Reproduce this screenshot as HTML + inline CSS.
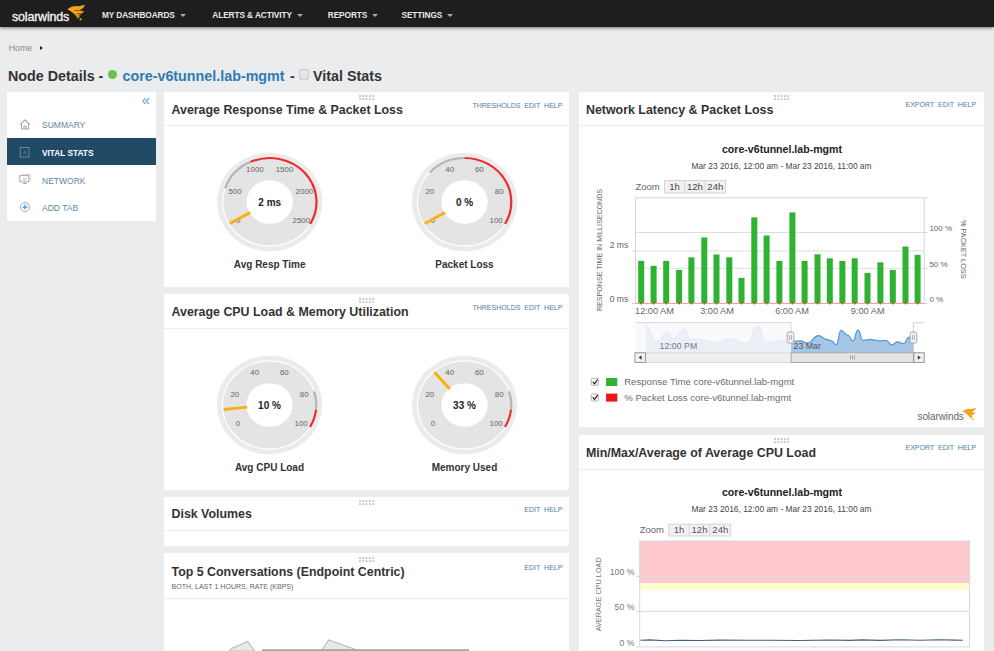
<!DOCTYPE html>
<html><head><meta charset="utf-8">
<style>
*{margin:0;padding:0;box-sizing:border-box}
html,body{width:994px;height:651px;overflow:hidden;background:#ebecee;font-family:"Liberation Sans",sans-serif;color:#333;position:relative}
.a{position:absolute;white-space:nowrap}
#nav{left:0;top:0;width:994px;height:27px;background:#1e1e1e;box-shadow:0 1.5px 3px rgba(0,0,0,.4)}
.nv{position:absolute;top:10px;font-size:8.3px;font-weight:bold;color:#e8e8e8;letter-spacing:-0.1px}
.caret{display:inline-block;width:0;height:0;border-left:3px solid transparent;border-right:3px solid transparent;border-top:3px solid #aaa;margin-left:5px;vertical-align:1px}
.panel{position:absolute;background:#fff}
.ph{position:absolute;left:0;right:0;top:0;border-bottom:1px solid #ececec}
.pt{position:absolute;left:7.5px;font-size:12.4px;font-weight:bold;color:#333}
.pl{position:absolute;font-size:7.1px;color:#4f82a3;letter-spacing:-0.05px}
.grip{position:absolute}
.side{position:absolute;font-size:8.5px;color:#5b88a3;left:42px}
</style></head><body>
<div id="nav" class="a"></div>
<div class="a" style="left:12px;top:9.5px;font-size:12.4px;color:#f2f2f2;letter-spacing:-0.15px;-webkit-text-stroke:0.35px #f2f2f2">solarwinds</div>
<svg class="a" style="left:0;top:0" width="100" height="27" viewBox="0 0 100 27"><path d="M67.3 9.2 Q73 4.8 78.6 6.3 L85.2 4.7 Q83.6 8.6 79.6 10.3 L84.6 11.2 Q81.6 14 78.6 14.9 L80.6 15.6 Q79.2 17.8 77.6 18.4 Q75.5 13.5 67.3 9.2 Z" fill="#f7a21b"/><circle cx="80.6" cy="19.3" r="1.1" fill="#f7a21b"/><path d="M74.5 10.6 Q79 10.4 84 11.1 M76.5 13.9 Q78.5 13.8 81 13.4 M77.2 16.2 Q78.6 16 80.2 15.6" fill="none" stroke="#1e1e1e" stroke-width="0.55"/></svg>
<div class="nv" style="left:102px">MY DASHBOARDS<span class="caret"></span></div>
<div class="nv" style="left:212.3px">ALERTS &amp; ACTIVITY<span class="caret"></span></div>
<div class="nv" style="left:327.8px">REPORTS<span class="caret"></span></div>
<div class="nv" style="left:401.5px">SETTINGS<span class="caret"></span></div>

<div class="a" style="left:8.8px;top:42.5px;font-size:8.7px;color:#8a8a8a">Home</div>
<div class="a" style="left:39.5px;top:46px;width:0;height:0;border-top:2.3px solid transparent;border-bottom:2.3px solid transparent;border-left:3.6px solid #222"></div>

<div class="a" style="left:8px;top:68px;font-size:14.3px;font-weight:bold;color:#333">Node Details -</div>
<div class="a" style="left:107.5px;top:70.3px;width:9px;height:9px;border-radius:50%;background:#6cc04a"></div>
<div class="a" style="left:122.5px;top:68px;font-size:14.3px;font-weight:bold;color:#2f7bb0">core-v6tunnel.lab-mgmt</div>
<div class="a" style="left:290px;top:68px;font-size:14.3px;font-weight:bold;color:#333">-</div>
<svg class="a" style="left:298px;top:68px" width="12" height="13" viewBox="0 0 12 13"><rect x="1.8" y="1.9" width="8.4" height="9.2" rx="1.4" fill="none" stroke="#c6c6c6" stroke-width="1.2"/><path d="M4 8.3 L6 4.8 L8 8.3 M3.8 8.6 H8.2" fill="none" stroke="#d2d2d2" stroke-width="0.8"/></svg>
<div class="a" style="left:313px;top:68px;font-size:14.3px;font-weight:bold;color:#333">Vital Stats</div>

<!-- sidebar -->
<div class="panel" style="left:7px;top:92px;width:149px;height:129px">
  <div class="a" style="left:134.5px;top:-1px;font-size:15px;color:#4aa3d0">&laquo;</div>
  <div class="side" style="left:35px;top:28px">SUMMARY</div>
  <div class="a" style="left:0;top:46px;width:149px;height:27px;background:#204a66"></div>
  <div class="side" style="left:35px;top:56px;color:#fff;font-weight:bold;font-size:8.3px">VITAL STATS</div>
  <div class="side" style="left:35px;top:84px">NETWORK</div>
  <div class="side" style="left:35px;top:111px">ADD TAB</div>
  <svg class="a" style="left:0;top:0" width="40" height="129" viewBox="0 0 40 129">
    <path d="M13.3 32.3 L18 27.8 L22.7 32.3 M14.5 31.2 V37 H21.5 V31.2 M17 37 V34.2 H19 V37" fill="none" stroke="#a8a8a8" stroke-width="1.1"/>
    <rect x="13.3" y="55.5" width="8.6" height="9.6" fill="none" stroke="#6d8599" stroke-width="1"/>
    <path d="M16.3 62.3 L17.6 59.3 L18.9 62.3" fill="none" stroke="#6d8599" stroke-width="0.7"/>
    <rect x="12.8" y="83.6" width="9" height="6.2" fill="none" stroke="#a8a8a8" stroke-width="1"/>
    <path d="M14.8 82.3 H23.3 V88" fill="none" stroke="#c8c8c8" stroke-width="0.8"/>
    <path d="M15.8 91.5 H19.8 M17.8 89.8 V91.5" stroke="#a8a8a8" stroke-width="0.9"/>
    <path d="M16 87 L17.3 88 L19.3 85.6" fill="none" stroke="#909090" stroke-width="0.8"/>
    <circle cx="17.9" cy="115.1" r="4.5" fill="none" stroke="#aaa" stroke-width="1"/>
    <path d="M17.9 112.6 V117.6 M15.4 115.1 H20.4" stroke="#3a9ad6" stroke-width="1.2"/>
  </svg>
</div>

<div class="panel" style="left:164px;top:92px;width:405px;height:195px">
  <div class="ph" style="height:34.1px"></div>
  <svg class="grip" style="left:195.2px;top:2.9px" width="16" height="6" style="overflow:visible"><rect x="0.00" y="0.00" width="2" height="2" fill="#cbcbcb"/><rect x="3.30" y="0.00" width="2" height="2" fill="#cbcbcb"/><rect x="6.60" y="0.00" width="2" height="2" fill="#cbcbcb"/><rect x="9.90" y="0.00" width="2" height="2" fill="#cbcbcb"/><rect x="13.20" y="0.00" width="2" height="2" fill="#cbcbcb"/><rect x="0.00" y="3.10" width="2" height="2" fill="#cbcbcb"/><rect x="3.30" y="3.10" width="2" height="2" fill="#cbcbcb"/><rect x="6.60" y="3.10" width="2" height="2" fill="#cbcbcb"/><rect x="9.90" y="3.10" width="2" height="2" fill="#cbcbcb"/><rect x="13.20" y="3.10" width="2" height="2" fill="#cbcbcb"/></svg>
  <div class="pt" style="top:10.5px">Average Response Time &amp; Packet Loss</div>
  <div class="pl" style="right:6.6px;top:9.6px">THRESHOLDS&nbsp; EDIT&nbsp; HELP</div>
</div>
<div class="panel" style="left:164px;top:294px;width:405px;height:196px">
  <div class="ph" style="height:34.8px"></div>
  <svg class="grip" style="left:195.2px;top:4.2px" width="16" height="6" style="overflow:visible"><rect x="0.00" y="0.00" width="2" height="2" fill="#cbcbcb"/><rect x="3.30" y="0.00" width="2" height="2" fill="#cbcbcb"/><rect x="6.60" y="0.00" width="2" height="2" fill="#cbcbcb"/><rect x="9.90" y="0.00" width="2" height="2" fill="#cbcbcb"/><rect x="13.20" y="0.00" width="2" height="2" fill="#cbcbcb"/><rect x="0.00" y="3.10" width="2" height="2" fill="#cbcbcb"/><rect x="3.30" y="3.10" width="2" height="2" fill="#cbcbcb"/><rect x="6.60" y="3.10" width="2" height="2" fill="#cbcbcb"/><rect x="9.90" y="3.10" width="2" height="2" fill="#cbcbcb"/><rect x="13.20" y="3.10" width="2" height="2" fill="#cbcbcb"/></svg>
  <div class="pt" style="top:10.5px">Average CPU Load &amp; Memory Utilization</div>
  <div class="pl" style="right:6.6px;top:9.8px">THRESHOLDS&nbsp; EDIT&nbsp; HELP</div>
</div>
<div class="panel" style="left:164px;top:497px;width:405px;height:49px">
  <div class="ph" style="height:34.4px"></div>
  <svg class="grip" style="left:195.2px;top:3.0px" width="16" height="6" style="overflow:visible"><rect x="0.00" y="0.00" width="2" height="2" fill="#cbcbcb"/><rect x="3.30" y="0.00" width="2" height="2" fill="#cbcbcb"/><rect x="6.60" y="0.00" width="2" height="2" fill="#cbcbcb"/><rect x="9.90" y="0.00" width="2" height="2" fill="#cbcbcb"/><rect x="13.20" y="0.00" width="2" height="2" fill="#cbcbcb"/><rect x="0.00" y="3.10" width="2" height="2" fill="#cbcbcb"/><rect x="3.30" y="3.10" width="2" height="2" fill="#cbcbcb"/><rect x="6.60" y="3.10" width="2" height="2" fill="#cbcbcb"/><rect x="9.90" y="3.10" width="2" height="2" fill="#cbcbcb"/><rect x="13.20" y="3.10" width="2" height="2" fill="#cbcbcb"/></svg>
  <div class="pt" style="top:10.0px">Disk Volumes</div>
  <div class="pl" style="right:6.6px;top:9.3px">EDIT&nbsp; HELP</div>
</div>
<div class="panel" style="left:164px;top:553.3px;width:405px;height:100px">
  <div class="ph" style="height:45.8px"></div>
  <svg class="grip" style="left:195.2px;top:3.4px" width="16" height="6" style="overflow:visible"><rect x="0.00" y="0.00" width="2" height="2" fill="#cbcbcb"/><rect x="3.30" y="0.00" width="2" height="2" fill="#cbcbcb"/><rect x="6.60" y="0.00" width="2" height="2" fill="#cbcbcb"/><rect x="9.90" y="0.00" width="2" height="2" fill="#cbcbcb"/><rect x="13.20" y="0.00" width="2" height="2" fill="#cbcbcb"/><rect x="0.00" y="3.10" width="2" height="2" fill="#cbcbcb"/><rect x="3.30" y="3.10" width="2" height="2" fill="#cbcbcb"/><rect x="6.60" y="3.10" width="2" height="2" fill="#cbcbcb"/><rect x="9.90" y="3.10" width="2" height="2" fill="#cbcbcb"/><rect x="13.20" y="3.10" width="2" height="2" fill="#cbcbcb"/></svg>
  <div class="pt" style="top:11.6px">Top 5 Conversations (Endpoint Centric)</div>
  <div class="pl" style="right:6.6px;top:10.5px">EDIT&nbsp; HELP</div>
  <div class="a" style="left:7.5px;top:30px;font-size:7.05px;color:#666">BOTH, LAST 1 HOURS, RATE (KBPS)</div>
</div>
<div class="panel" style="left:578.5px;top:92.3px;width:405.5px;height:334.5px">
  <div class="ph" style="height:33.7px"></div>
  <svg class="grip" style="left:195px;top:2.9px" width="16" height="6" style="overflow:visible"><rect x="0.00" y="0.00" width="2" height="2" fill="#cbcbcb"/><rect x="3.30" y="0.00" width="2" height="2" fill="#cbcbcb"/><rect x="6.60" y="0.00" width="2" height="2" fill="#cbcbcb"/><rect x="9.90" y="0.00" width="2" height="2" fill="#cbcbcb"/><rect x="13.20" y="0.00" width="2" height="2" fill="#cbcbcb"/><rect x="0.00" y="3.10" width="2" height="2" fill="#cbcbcb"/><rect x="3.30" y="3.10" width="2" height="2" fill="#cbcbcb"/><rect x="6.60" y="3.10" width="2" height="2" fill="#cbcbcb"/><rect x="9.90" y="3.10" width="2" height="2" fill="#cbcbcb"/><rect x="13.20" y="3.10" width="2" height="2" fill="#cbcbcb"/></svg>
  <div class="pt" style="top:10.5px">Network Latency &amp; Packet Loss</div>
  <div class="pl" style="right:7.8px;top:9.1px">EXPORT&nbsp; EDIT&nbsp; HELP</div>
</div>
<div class="panel" style="left:578.5px;top:435.2px;width:405.5px;height:220px">
  <div class="ph" style="height:34.5px"></div>
  <svg class="grip" style="left:195px;top:2.9px" width="16" height="6" style="overflow:visible"><rect x="0.00" y="0.00" width="2" height="2" fill="#cbcbcb"/><rect x="3.30" y="0.00" width="2" height="2" fill="#cbcbcb"/><rect x="6.60" y="0.00" width="2" height="2" fill="#cbcbcb"/><rect x="9.90" y="0.00" width="2" height="2" fill="#cbcbcb"/><rect x="13.20" y="0.00" width="2" height="2" fill="#cbcbcb"/><rect x="0.00" y="3.10" width="2" height="2" fill="#cbcbcb"/><rect x="3.30" y="3.10" width="2" height="2" fill="#cbcbcb"/><rect x="6.60" y="3.10" width="2" height="2" fill="#cbcbcb"/><rect x="9.90" y="3.10" width="2" height="2" fill="#cbcbcb"/><rect x="13.20" y="3.10" width="2" height="2" fill="#cbcbcb"/></svg>
  <div class="pt" style="top:10.6px">Min/Max/Average of Average CPU Load</div>
  <div class="pl" style="right:7.8px;top:9.1px">EXPORT&nbsp; EDIT&nbsp; HELP</div>
</div>
<svg class="a" style="left:0;top:0" width="994" height="651" font-family="Liberation Sans"><g transform="translate(269.7 202) scale(1 0.94) translate(-269.7 -202)">
<circle cx="269.7" cy="202" r="52.5" fill="#ebebeb"/>
<circle cx="269.7" cy="202" r="47.6" fill="#fff"/>
<circle cx="269.7" cy="202" r="46.4" fill="#e4e4e4"/>
<path d="M225.19 187.54 A46.8 46.8 0 0 1 250.66 159.25" fill="none" stroke="#b4b4b4" stroke-width="2.2"/>
<path d="M250.66 159.25 A46.8 46.8 0 0 1 310.23 225.40" fill="none" stroke="#ee2a2f" stroke-width="2.2"/>
<circle cx="269.7" cy="202" r="23.2" fill="#fff"/>
</g>
<text x="238.1" y="223.1" font-size="7.9" fill="#636363" text-anchor="middle">0</text>
<text x="235.0" y="193.5" font-size="7.9" fill="#636363" text-anchor="middle">500</text>
<text x="254.9" y="171.5" font-size="7.9" fill="#636363" text-anchor="middle">1000</text>
<text x="284.5" y="171.5" font-size="7.9" fill="#636363" text-anchor="middle">1500</text>
<text x="304.4" y="193.5" font-size="7.9" fill="#636363" text-anchor="middle">2000</text>
<text x="301.3" y="223.1" font-size="7.9" fill="#636363" text-anchor="middle">2500</text>
<g transform="translate(269.7 202) scale(1 0.94) translate(-269.7 -202)"><line x1="250.18" y1="213.18" x2="229.79" y2="224.87" stroke="#f5b20f" stroke-width="3"/></g>
<text x="269.7" y="205.6" font-size="10" font-weight="bold" fill="#222" text-anchor="middle">2 ms</text>
<text x="269.7" y="268" font-size="10" font-weight="bold" fill="#333" text-anchor="middle">Avg Resp Time</text>
<g transform="translate(464.5 202) scale(1 0.94) translate(-464.5 -202)">
<circle cx="464.5" cy="202" r="52.5" fill="#ebebeb"/>
<circle cx="464.5" cy="202" r="47.6" fill="#fff"/>
<circle cx="464.5" cy="202" r="46.4" fill="#e4e4e4"/>
<path d="M429.72 170.68 A46.8 46.8 0 0 1 464.50 155.20" fill="none" stroke="#b4b4b4" stroke-width="2.2"/>
<path d="M464.50 155.20 A46.8 46.8 0 0 1 505.03 225.40" fill="none" stroke="#ee2a2f" stroke-width="2.2"/>
<circle cx="464.5" cy="202" r="23.2" fill="#fff"/>
</g>
<text x="432.9" y="223.1" font-size="7.9" fill="#636363" text-anchor="middle">0</text>
<text x="429.8" y="193.5" font-size="7.9" fill="#636363" text-anchor="middle">20</text>
<text x="449.7" y="171.5" font-size="7.9" fill="#636363" text-anchor="middle">40</text>
<text x="479.3" y="171.5" font-size="7.9" fill="#636363" text-anchor="middle">60</text>
<text x="499.2" y="193.5" font-size="7.9" fill="#636363" text-anchor="middle">80</text>
<text x="496.1" y="223.1" font-size="7.9" fill="#636363" text-anchor="middle">100</text>
<g transform="translate(464.5 202) scale(1 0.94) translate(-464.5 -202)"><line x1="445.01" y1="213.25" x2="424.66" y2="225.00" stroke="#f5b20f" stroke-width="3"/></g>
<text x="464.5" y="205.6" font-size="10" font-weight="bold" fill="#222" text-anchor="middle">0 %</text>
<text x="464.5" y="268" font-size="10" font-weight="bold" fill="#333" text-anchor="middle">Packet Loss</text>
<g transform="translate(269.5 405) scale(1 0.94) translate(-269.5 -405)">
<circle cx="269.5" cy="405" r="52.5" fill="#ebebeb"/>
<circle cx="269.5" cy="405" r="47.6" fill="#fff"/>
<circle cx="269.5" cy="405" r="46.4" fill="#e4e4e4"/>
<path d="M314.01 390.54 A46.8 46.8 0 0 1 316.04 409.89" fill="none" stroke="#b4b4b4" stroke-width="2.2"/>
<path d="M316.04 409.89 A46.8 46.8 0 0 1 310.03 428.40" fill="none" stroke="#ee2a2f" stroke-width="2.2"/>
<circle cx="269.5" cy="405" r="23.2" fill="#fff"/>
</g>
<text x="237.9" y="426.1" font-size="7.9" fill="#636363" text-anchor="middle">0</text>
<text x="234.8" y="396.5" font-size="7.9" fill="#636363" text-anchor="middle">20</text>
<text x="254.7" y="374.5" font-size="7.9" fill="#636363" text-anchor="middle">40</text>
<text x="284.3" y="374.5" font-size="7.9" fill="#636363" text-anchor="middle">60</text>
<text x="304.2" y="396.5" font-size="7.9" fill="#636363" text-anchor="middle">80</text>
<text x="301.1" y="426.1" font-size="7.9" fill="#636363" text-anchor="middle">100</text>
<g transform="translate(269.5 405) scale(1 0.94) translate(-269.5 -405)"><line x1="247.12" y1="407.35" x2="223.75" y2="409.81" stroke="#f5b20f" stroke-width="3"/></g>
<text x="269.5" y="408.6" font-size="10" font-weight="bold" fill="#222" text-anchor="middle">10 %</text>
<text x="269.5" y="471" font-size="10" font-weight="bold" fill="#333" text-anchor="middle">Avg CPU Load</text>
<g transform="translate(464.5 405) scale(1 0.94) translate(-464.5 -405)">
<circle cx="464.5" cy="405" r="52.5" fill="#ebebeb"/>
<circle cx="464.5" cy="405" r="47.6" fill="#fff"/>
<circle cx="464.5" cy="405" r="46.4" fill="#e4e4e4"/>
<path d="M509.01 390.54 A46.8 46.8 0 0 1 511.04 409.89" fill="none" stroke="#b4b4b4" stroke-width="2.2"/>
<path d="M511.04 409.89 A46.8 46.8 0 0 1 505.03 428.40" fill="none" stroke="#ee2a2f" stroke-width="2.2"/>
<circle cx="464.5" cy="405" r="23.2" fill="#fff"/>
</g>
<text x="432.9" y="426.1" font-size="7.9" fill="#636363" text-anchor="middle">0</text>
<text x="429.8" y="396.5" font-size="7.9" fill="#636363" text-anchor="middle">20</text>
<text x="449.7" y="374.5" font-size="7.9" fill="#636363" text-anchor="middle">40</text>
<text x="479.3" y="374.5" font-size="7.9" fill="#636363" text-anchor="middle">60</text>
<text x="499.2" y="396.5" font-size="7.9" fill="#636363" text-anchor="middle">80</text>
<text x="496.1" y="426.1" font-size="7.9" fill="#636363" text-anchor="middle">100</text>
<g transform="translate(464.5 405) scale(1 0.94) translate(-464.5 -405)"><line x1="449.80" y1="387.97" x2="434.44" y2="370.18" stroke="#f5b20f" stroke-width="3"/></g>
<text x="464.5" y="408.6" font-size="10" font-weight="bold" fill="#222" text-anchor="middle">33 %</text>
<text x="464.5" y="471" font-size="10" font-weight="bold" fill="#333" text-anchor="middle">Memory Used</text></svg>
<svg class="a" style="left:0;top:0" width="994" height="651" font-family="Liberation Sans"><text x="782" y="152.8" font-size="10.6" font-weight="bold" fill="#222" text-anchor="middle">core-v6tunnel.lab-mgmt</text>
<text x="781.5" y="168.5" font-size="8.4" fill="#444" text-anchor="middle">Mar 23 2016, 12:00 am - Mar 23 2016, 11:00 am</text>
<text x="635.5" y="190" font-size="9.5" fill="#666">Zoom</text>
<rect x="664.5" y="180.5" width="61" height="12.5" fill="#f2f2f2" stroke="#d4d4d4" stroke-width="1"/>
<line x1="684.8" y1="180.5" x2="684.8" y2="193" stroke="#d4d4d4"/><line x1="705" y1="180.5" x2="705" y2="193" stroke="#d4d4d4"/>
<text x="674.6" y="190" font-size="9.5" fill="#444" text-anchor="middle">1h</text>
<text x="694.9" y="190" font-size="9.5" fill="#444" text-anchor="middle">12h</text>
<text x="715.3" y="190" font-size="9.5" fill="#444" text-anchor="middle">24h</text>
<rect x="635.5" y="197.8" width="288.70000000000005" height="105.69999999999999" fill="none" stroke="#d6d6d6" stroke-width="1"/>
<line x1="635.5" y1="232.5" x2="924.2" y2="232.5" stroke="#dedede" stroke-width="1"/>
<line x1="635.5" y1="250.9" x2="924.2" y2="250.9" stroke="#dedede" stroke-width="1"/>
<line x1="635.5" y1="268.3" x2="924.2" y2="268.3" stroke="#dedede" stroke-width="1"/>
<line x1="924.2" y1="197.8" x2="927.7" y2="197.8" stroke="#d6d6d6"/>
<line x1="924.2" y1="232.5" x2="927.7" y2="232.5" stroke="#d6d6d6"/>
<line x1="924.2" y1="268.3" x2="927.7" y2="268.3" stroke="#d6d6d6"/>
<line x1="924.2" y1="303.5" x2="927.7" y2="303.5" stroke="#d6d6d6"/>
<line x1="632.0" y1="250.9" x2="635.5" y2="250.9" stroke="#d6d6d6"/>
<line x1="632.0" y1="303.5" x2="635.5" y2="303.5" stroke="#d6d6d6"/>
<rect x="638.2" y="260.9" width="6" height="42.6" fill="#2db231"/>
<rect x="650.6" y="265.9" width="6" height="37.6" fill="#2db231"/>
<rect x="663.2" y="260.9" width="6" height="42.6" fill="#2db231"/>
<rect x="676.1" y="269.9" width="6" height="33.6" fill="#2db231"/>
<rect x="688.4" y="257.3" width="6" height="46.2" fill="#2db231"/>
<rect x="701.3" y="237.5" width="6" height="66.0" fill="#2db231"/>
<rect x="713.5" y="254.5" width="6" height="49.0" fill="#2db231"/>
<rect x="726.3" y="257.3" width="6" height="46.2" fill="#2db231"/>
<rect x="738.5" y="277.9" width="6" height="25.6" fill="#2db231"/>
<rect x="751.3" y="217.4" width="6" height="86.1" fill="#2db231"/>
<rect x="763.6" y="235.5" width="6" height="68.0" fill="#2db231"/>
<rect x="776.4" y="260.9" width="6" height="42.6" fill="#2db231"/>
<rect x="789.4" y="212.4" width="6" height="91.1" fill="#2db231"/>
<rect x="801.6" y="260.9" width="6" height="42.6" fill="#2db231"/>
<rect x="814.5" y="254.3" width="6" height="49.2" fill="#2db231"/>
<rect x="826.8" y="258.3" width="6" height="45.2" fill="#2db231"/>
<rect x="839.4" y="260.9" width="6" height="42.6" fill="#2db231"/>
<rect x="851.7" y="258.3" width="6" height="45.2" fill="#2db231"/>
<rect x="864.5" y="272.9" width="6" height="30.6" fill="#2db231"/>
<rect x="877.4" y="262.3" width="6" height="41.2" fill="#2db231"/>
<rect x="889.8" y="269.9" width="6" height="33.6" fill="#2db231"/>
<rect x="902.5" y="246.5" width="6" height="57.0" fill="#2db231"/>
<rect x="914.6" y="254.9" width="6" height="48.6" fill="#2db231"/>
<line x1="635.5" y1="303.5" x2="924.2" y2="303.5" stroke="#f3a0a0" stroke-width="1"/>
<circle cx="641.2" cy="303.5" r="1" fill="#e83030"/>
<circle cx="653.6" cy="303.5" r="1" fill="#e83030"/>
<circle cx="666.2" cy="303.5" r="1" fill="#e83030"/>
<circle cx="679.1" cy="303.5" r="1" fill="#e83030"/>
<circle cx="691.4" cy="303.5" r="1" fill="#e83030"/>
<circle cx="704.3" cy="303.5" r="1" fill="#e83030"/>
<circle cx="716.5" cy="303.5" r="1" fill="#e83030"/>
<circle cx="729.3" cy="303.5" r="1" fill="#e83030"/>
<circle cx="741.5" cy="303.5" r="1" fill="#e83030"/>
<circle cx="754.3" cy="303.5" r="1" fill="#e83030"/>
<circle cx="766.6" cy="303.5" r="1" fill="#e83030"/>
<circle cx="779.4" cy="303.5" r="1" fill="#e83030"/>
<circle cx="792.4" cy="303.5" r="1" fill="#e83030"/>
<circle cx="804.6" cy="303.5" r="1" fill="#e83030"/>
<circle cx="817.5" cy="303.5" r="1" fill="#e83030"/>
<circle cx="829.8" cy="303.5" r="1" fill="#e83030"/>
<circle cx="842.4" cy="303.5" r="1" fill="#e83030"/>
<circle cx="854.7" cy="303.5" r="1" fill="#e83030"/>
<circle cx="867.5" cy="303.5" r="1" fill="#e83030"/>
<circle cx="880.4" cy="303.5" r="1" fill="#e83030"/>
<circle cx="892.8" cy="303.5" r="1" fill="#e83030"/>
<circle cx="905.5" cy="303.5" r="1" fill="#e83030"/>
<circle cx="917.6" cy="303.5" r="1" fill="#e83030"/>
<text x="628.3" y="247.6" font-size="8.6" fill="#666" text-anchor="end">2 ms</text>
<text x="628.3" y="301.8" font-size="8.6" fill="#666" text-anchor="end">0 ms</text>
<text x="929.4" y="231" font-size="8" fill="#666">100 %</text>
<text x="929.4" y="267" font-size="8" fill="#666">50 %</text>
<text x="929.4" y="301.8" font-size="8" fill="#666">0 %</text>
<text x="654.5" y="314.2" font-size="9.2" fill="#666" text-anchor="middle">12:00 AM</text>
<text x="717" y="314.2" font-size="9.2" fill="#666" text-anchor="middle">3:00 AM</text>
<text x="792" y="314.2" font-size="9.2" fill="#666" text-anchor="middle">6:00 AM</text>
<text x="867.7" y="314.2" font-size="9.2" fill="#666" text-anchor="middle">9:00 AM</text>
<text transform="translate(601.5,250) rotate(-90)" font-size="7.1" fill="#666" text-anchor="middle">RESPONSE TIME IN MILLISECONDS</text>
<text transform="translate(960.8,249.3) rotate(90)" font-size="7.3" fill="#666" text-anchor="middle">% PACKET LOSS</text>
<path d="M635.5 322.7 H791.1 V352.3 M913.4 352.3 V322.7 H924.2" fill="none" stroke="#d4d4d4" stroke-width="1"/>
<path d="M646 326 C651.2 326 651.2 341.6 656.4 341.6 C662.0 341.6 662.0 331.9 667.7 331.9 C670.5 331.9 670.5 338.3 673.3 338.3 C679.0 338.3 679.0 328.7 684.6 328.7 C687.4 328.7 687.4 339.1 690.2 339.1 C693.8 339.1 693.8 339.1 697.4 339.1 C706.2 339.1 706.2 342.4 715 342.4 C722.3 342.4 722.3 338.8 729.6 338.8 C738.3 338.8 738.3 343.2 747 343.2 C752.1 343.2 752.1 326 757.3 326 C762.0 326 762.0 342.4 766.7 342.4 C773.1 342.4 773.1 340.4 779.5 340.4 C785.3 340.4 785.3 341.6 791.1 341.6 V352.3 H646 Z" fill="#e3ebf5"/>
<path d="M646 326 C651.2 326 651.2 341.6 656.4 341.6 C662.0 341.6 662.0 331.9 667.7 331.9 C670.5 331.9 670.5 338.3 673.3 338.3 C679.0 338.3 679.0 328.7 684.6 328.7 C687.4 328.7 687.4 339.1 690.2 339.1 C693.8 339.1 693.8 339.1 697.4 339.1 C706.2 339.1 706.2 342.4 715 342.4 C722.3 342.4 722.3 338.8 729.6 338.8 C738.3 338.8 738.3 343.2 747 343.2 C752.1 343.2 752.1 326 757.3 326 C762.0 326 762.0 342.4 766.7 342.4 C773.1 342.4 773.1 340.4 779.5 340.4 C785.3 340.4 785.3 341.6 791.1 341.6" fill="none" stroke="#d5e1ee" stroke-width="1"/>
<rect x="635.5" y="323.2" width="155.60000000000002" height="29.100000000000023" fill="#f3f5f9" fill-opacity="0.45"/>
<path d="M791.1 341.6 C796.0 341.6 796.0 340.8 800.8 340.8 C804.0 340.8 804.0 343.2 807.2 343.2 C812.9 343.2 812.9 335.6 818.5 335.6 C822.5 335.6 822.5 339.5 826.5 339.5 C829.0 339.5 829.0 340.8 831.4 340.8 C833.8 340.8 833.8 344.8 836.2 344.8 C838.6 344.8 838.6 330.3 841 330.3 C844.2 330.3 844.2 335.1 847.5 335.1 C850.3 335.1 850.3 340.8 853.1 340.8 C855.5 340.8 855.5 329.8 858 329.8 C860.4 329.8 860.4 340.4 862.8 340.4 C866.4 340.4 866.4 339.5 870 339.5 C874.9 339.5 874.9 340.8 879.7 340.8 C882.9 340.8 882.9 340.4 886.1 340.4 C888.9 340.4 888.9 344.8 891.7 344.8 C894.5 344.8 894.5 342 897.4 342 C900.6 342 900.6 343.7 903.8 343.7 C906.2 343.7 906.2 337.5 908.6 337.5 C911.0 337.5 911.0 337.5 913.4 337.5 V352.3 H791.1 Z" fill="#a5c6e6"/>
<path d="M791.1 341.6 C796.0 341.6 796.0 340.8 800.8 340.8 C804.0 340.8 804.0 343.2 807.2 343.2 C812.9 343.2 812.9 335.6 818.5 335.6 C822.5 335.6 822.5 339.5 826.5 339.5 C829.0 339.5 829.0 340.8 831.4 340.8 C833.8 340.8 833.8 344.8 836.2 344.8 C838.6 344.8 838.6 330.3 841 330.3 C844.2 330.3 844.2 335.1 847.5 335.1 C850.3 335.1 850.3 340.8 853.1 340.8 C855.5 340.8 855.5 329.8 858 329.8 C860.4 329.8 860.4 340.4 862.8 340.4 C866.4 340.4 866.4 339.5 870 339.5 C874.9 339.5 874.9 340.8 879.7 340.8 C882.9 340.8 882.9 340.4 886.1 340.4 C888.9 340.4 888.9 344.8 891.7 344.8 C894.5 344.8 894.5 342 897.4 342 C900.6 342 900.6 343.7 903.8 343.7 C906.2 343.7 906.2 337.5 908.6 337.5 C911.0 337.5 911.0 337.5 913.4 337.5" fill="none" stroke="#5d9ad3" stroke-width="1.3"/>
<text x="659.6" y="349.4" font-size="8.8" fill="#777">12:00 PM</text>
<text x="793.5" y="349.4" font-size="8.8" fill="#555">23 Mar</text>
<rect x="787.2" y="332" width="6.6" height="11" rx="1.5" fill="#f2f2f2" stroke="#999" stroke-width="0.8"/>
<line x1="789.6" y1="335" x2="789.6" y2="340" stroke="#888" stroke-width="0.6"/><line x1="791.4" y1="335" x2="791.4" y2="340" stroke="#888" stroke-width="0.6"/>
<rect x="910.2" y="332" width="6.6" height="11" rx="1.5" fill="#f2f2f2" stroke="#999" stroke-width="0.8"/>
<line x1="912.6" y1="335" x2="912.6" y2="340" stroke="#888" stroke-width="0.6"/><line x1="914.4" y1="335" x2="914.4" y2="340" stroke="#888" stroke-width="0.6"/>
<rect x="635.5" y="352.8" width="288.70000000000005" height="9.6" fill="#eeeeee" stroke="#d0d0d0" stroke-width="0.8"/>
<rect x="791.1" y="352.8" width="122.3" height="9.6" fill="#e4e4e4" stroke="#9a9a9a" stroke-width="0.8"/>
<rect x="634.9" y="352.8" width="10.5" height="9.6" fill="#f0f0f0" stroke="#8a8a8a" stroke-width="0.8"/>
<path d="M641.5 355.5 L638.6 357.6 L641.5 359.7 Z" fill="#333"/>
<rect x="913.9" y="352.8" width="10.3" height="9.6" fill="#f0f0f0" stroke="#8a8a8a" stroke-width="0.8"/>
<path d="M917.8 355.5 L920.7 357.6 L917.8 359.7 Z" fill="#333"/>
<line x1="850.5" y1="355.5" x2="850.5" y2="359.5" stroke="#888" stroke-width="0.7"/><line x1="852.5" y1="355.5" x2="852.5" y2="359.5" stroke="#888" stroke-width="0.7"/><line x1="854.5" y1="355.5" x2="854.5" y2="359.5" stroke="#888" stroke-width="0.7"/>
<rect x="591.3" y="378.3" width="7" height="7" rx="1" fill="#f4f4f4" stroke="#999" stroke-width="0.7"/>
<path d="M592.8 381.8 L594.6 383.8 L597.6 379.5" fill="none" stroke="#222" stroke-width="1.2"/>
<rect x="606.1" y="378" width="11.2" height="8" fill="#2db231"/>
<text x="624.2" y="385.2" font-size="9.6" fill="#6c6c6c">Response Time core-v6tunnel.lab-mgmt</text>
<rect x="591.3" y="393.90000000000003" width="7" height="7" rx="1" fill="#f4f4f4" stroke="#999" stroke-width="0.7"/>
<path d="M592.8 397.40000000000003 L594.6 399.40000000000003 L597.6 395.1" fill="none" stroke="#222" stroke-width="1.2"/>
<rect x="606.1" y="393.6" width="11.2" height="8" fill="#f21515"/>
<text x="624.2" y="400.8" font-size="9.6" fill="#6c6c6c">% Packet Loss core-v6tunnel.lab-mgmt</text>
<text x="917.5" y="420" font-size="10" fill="#666" letter-spacing="-0.1">solarwinds</text>
<g transform="translate(910.2 404.1) scale(0.775 0.78)"><path d="M67.3 9.2 Q73 4.8 78.6 6.3 L85.2 4.7 Q83.6 8.6 79.6 10.3 L84.6 11.2 Q81.6 14 78.6 14.9 L80.6 15.6 Q79.2 17.8 77.6 18.4 Q75.5 13.5 67.3 9.2 Z" fill="#f7a21b"/><circle cx="80.6" cy="19.3" r="1.1" fill="#f7a21b"/></g></svg>
<svg class="a" style="left:0;top:0" width="994" height="651" font-family="Liberation Sans"><text x="782" y="495.8" font-size="10.6" font-weight="bold" fill="#222" text-anchor="middle">core-v6tunnel.lab-mgmt</text>
<text x="781.5" y="511.5" font-size="8.4" fill="#444" text-anchor="middle">Mar 23 2016, 12:00 am - Mar 23 2016, 11:00 am</text>
<text x="639.7" y="533.4" font-size="9.5" fill="#666">Zoom</text>
<rect x="668.8" y="524.2" width="62" height="11.8" fill="#f2f2f2" stroke="#d4d4d4" stroke-width="1"/>
<line x1="689.3" y1="524.2" x2="689.3" y2="536" stroke="#d4d4d4"/><line x1="709.8" y1="524.2" x2="709.8" y2="536" stroke="#d4d4d4"/>
<text x="679" y="533.4" font-size="9.5" fill="#555" text-anchor="middle">1h</text>
<text x="699.5" y="533.4" font-size="9.5" fill="#555" text-anchor="middle">12h</text>
<text x="720.3" y="533.4" font-size="9.5" fill="#555" text-anchor="middle">24h</text>
<rect x="639.7" y="541" width="329.9" height="42" fill="#fecad0"/>
<rect x="639.7" y="583" width="329.9" height="7.4" fill="#fdfdcf"/>
<rect x="639.7" y="541" width="329.9" height="105.89999999999998" fill="none" stroke="#d8d8d8" stroke-width="1"/>
<line x1="639.7" y1="576.5" x2="969.6" y2="576.5" stroke="#dcdcdc" stroke-width="1"/>
<line x1="639.7" y1="611.4" x2="969.6" y2="611.4" stroke="#dcdcdc" stroke-width="1"/>
<line x1="636.2" y1="576.5" x2="639.7" y2="576.5" stroke="#d6d6d6"/>
<line x1="636.2" y1="611.4" x2="639.7" y2="611.4" stroke="#d6d6d6"/>
<line x1="636.2" y1="646.9" x2="639.7" y2="646.9" stroke="#d6d6d6"/>
<text x="634.4" y="575" font-size="8.7" fill="#777" text-anchor="end">100 %</text>
<text x="634.4" y="610.3" font-size="8.7" fill="#777" text-anchor="end">50 %</text>
<text x="634.4" y="645.8" font-size="8.7" fill="#777" text-anchor="end">0 %</text>
<text transform="translate(601.3,594.3) rotate(-90)" font-size="7.3" fill="#777" text-anchor="middle">AVERAGE CPU LOAD</text>
<path transform="translate(0 0.6)" d="M640.5 639.6 L650 639.3 L665 640.1 L680 639.7 L700 639.9 L720 639.5 L745 639.7 L770 639.6 L800 639.9 L830 639.4 L850 639.8 L862 639.3 L880 639.8 L900 639.2 L920 639.6 L940 639.1 L955 639.5 L963 639.6" fill="none" stroke="#3f5f8c" stroke-width="1.1"/></svg>
<svg class="a" style="left:0;top:0" width="994" height="651"><path d="M229 651 L230.5 649 L247.7 641.4 L254.8 651 Z" fill="#e8e8e8" stroke="#bdbdbd" stroke-width="1.1"/><path d="M321 651 L322.6 649 L328.7 640 L357 650 L358 651 Z" fill="#e8e8e8" stroke="#bdbdbd" stroke-width="1.1"/><line x1="262" y1="650.3" x2="469" y2="650.3" stroke="#a4a4a4" stroke-width="2"/></svg>
</body></html>
